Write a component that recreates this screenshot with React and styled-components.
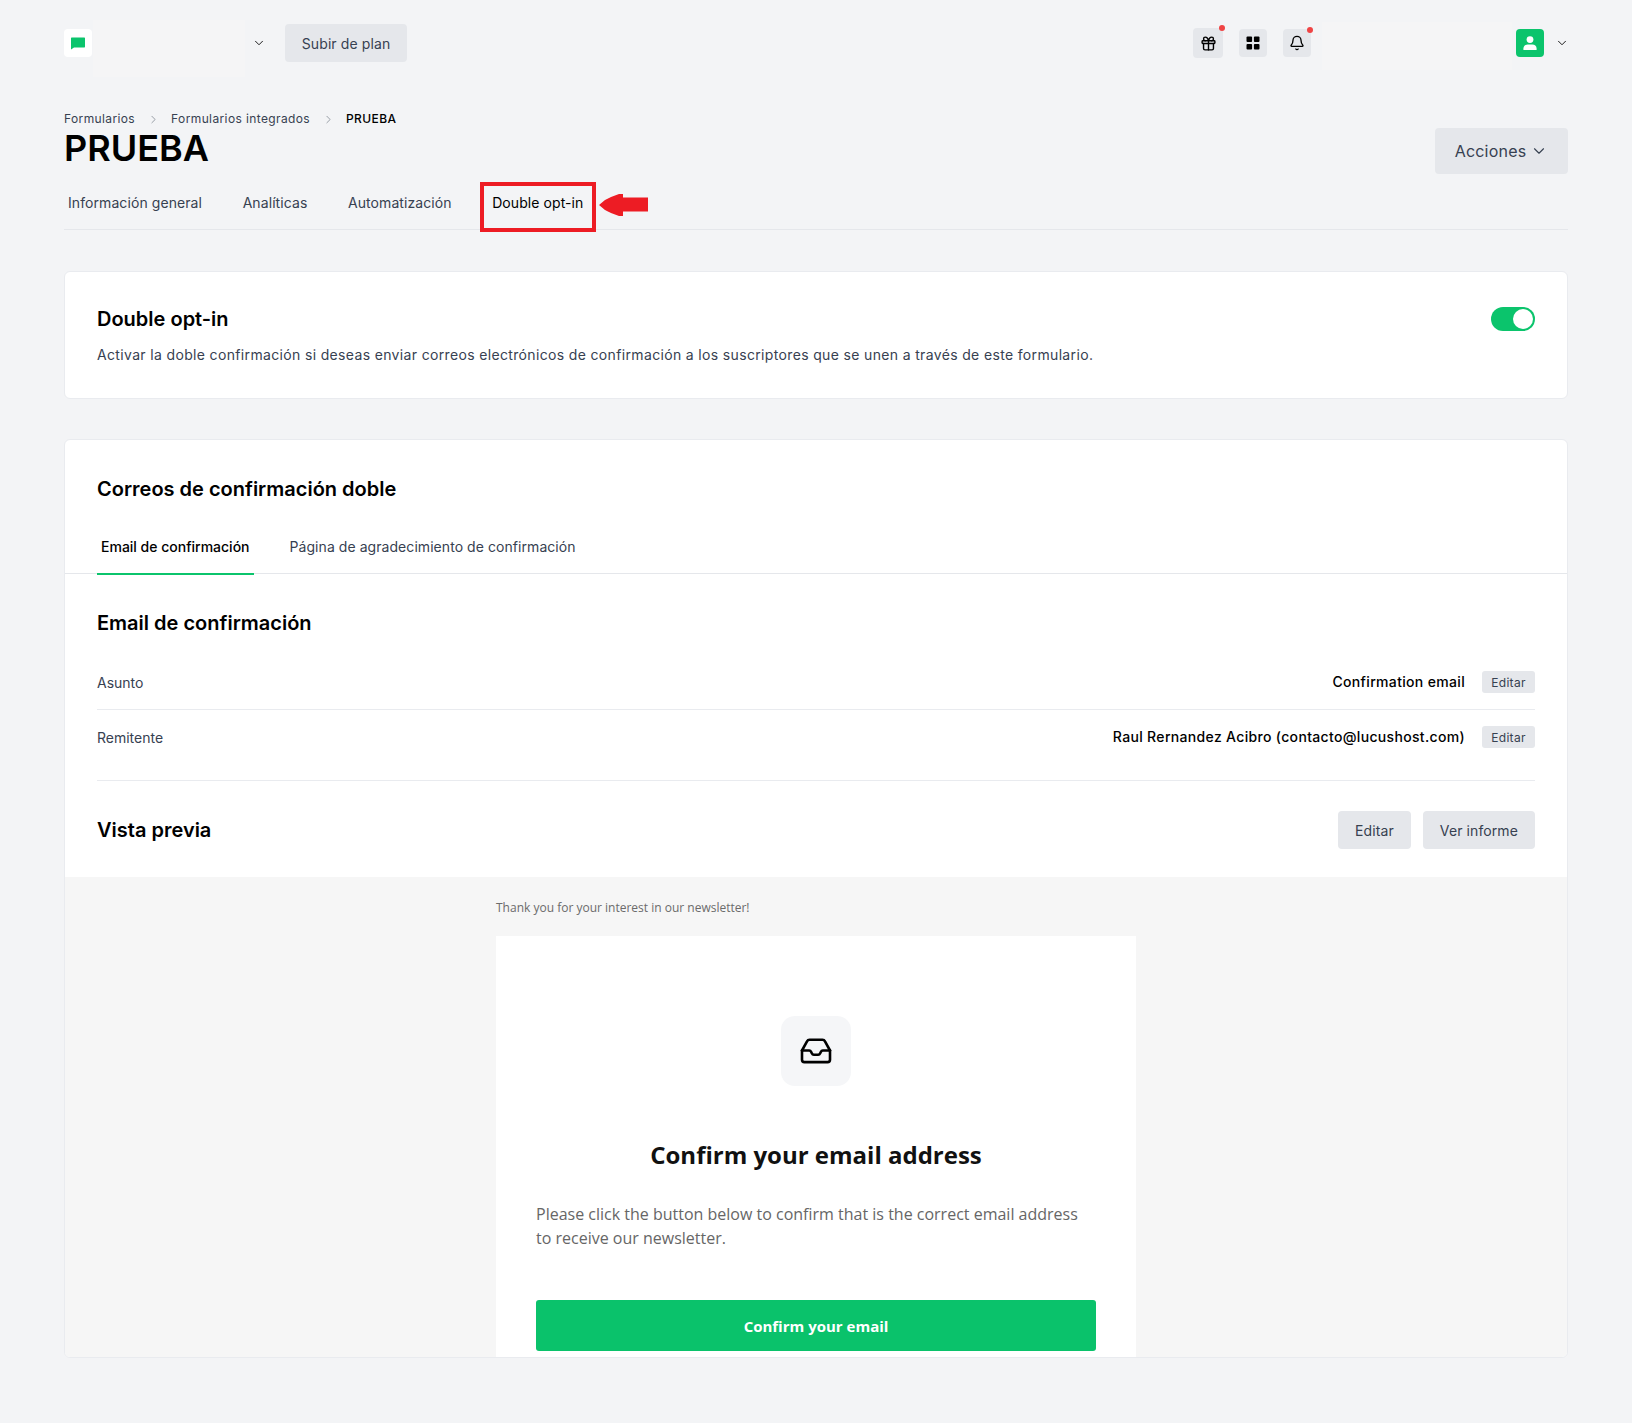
import React from 'react';
import styled, { createGlobalStyle } from 'styled-components';
import { ChevronDown, ChevronRight, Gift, Bell } from 'lucide-react';

const GlobalStyle = createGlobalStyle`
  html, body {
    margin: 0;
    padding: 0;
    background: #f3f4f6;
  }
  body {
    font-family: Inter, "Liberation Sans", sans-serif;
    color: #000;
  }
  * {
    box-sizing: border-box;
  }
`;

const Page = styled.div`
  min-height: 1423px;
  padding: 0 64px 66px;
`;

const TopBar = styled.header`
  height: 86px;
  padding-top: 20px;
  display: flex;
  justify-content: space-between;
  align-items: flex-start;
`;

const BarGroup = styled.div`
  display: flex;
  align-items: flex-start;
`;

const LogoBox = styled.div`
  width: 28px;
  height: 28px;
  margin-top: 9px;
  border-radius: 4px;
  background: #fff;
  display: flex;
  align-items: center;
  justify-content: center;
`;

const Blank = styled.div`
  width: ${(p) => p.$w}px;
  height: ${(p) => p.$h}px;
  margin: ${(p) => p.$m};
  background: #f5f5f6;
`;

const SmallChevron = styled.span`
  display: flex;
  width: 14px;
  margin: 16px ${(p) => p.$right}px 0 ${(p) => p.$left}px;
  color: #000;
`;

const PlanButton = styled.button`
  width: 122px;
  height: 38px;
  margin-top: 4px;
  padding: 0;
  border: 0;
  border-radius: 4px;
  background: #e5e7eb;
  color: #374151;
  font: 400 14px Inter, sans-serif;
  letter-spacing: 0.1px;
`;

const IconTile = styled.div`
  position: relative;
  width: ${(p) => p.$size || 28}px;
  height: ${(p) => p.$size || 28}px;
  margin: ${(p) => p.$m};
  border-radius: 4px;
  background: ${(p) => p.$bg || '#e5e7eb'};
  color: #000;
  display: flex;
  align-items: center;
  justify-content: center;
`;

const Dot = styled.span`
  position: absolute;
  top: ${(p) => p.$top}px;
  right: ${(p) => p.$right}px;
  width: 6px;
  height: 6px;
  border-radius: 50%;
  background: #ef4444;
`;

const HeadRow = styled.div`
  display: flex;
  justify-content: space-between;
  align-items: flex-end;
`;

const Breadcrumbs = styled.nav`
  display: flex;
  align-items: center;
  height: 16px;
  margin-top: 25px;
  font-size: 12px;
  line-height: 16px;
  letter-spacing: 0.38px;
  color: #374151;
`;

const Crumb = styled.span`
  color: ${(p) => (p.$current ? '#000' : '#374151')};
  font-weight: ${(p) => (p.$current ? 500 : 400)};
`;

const CrumbSep = styled.span`
  display: flex;
  width: 36px;
  justify-content: center;
  color: #4b5563;
`;

const Title = styled.h1`
  margin: 1px 0 0;
  font-size: 36px;
  line-height: 40px;
  font-weight: 600;
  color: #000;
`;

const ActionsButton = styled.button`
  width: 133px;
  height: 46px;
  border: 0;
  border-radius: 4px;
  background: #e5e7eb;
  color: #374151;
  font: 400 16px Inter, sans-serif;
  letter-spacing: 0.2px;
  display: flex;
  align-items: center;
  justify-content: center;
  gap: 4px;
  margin-bottom: -6px;
`;

const PageTabs = styled.div`
  display: flex;
  height: 61px;
  margin-top: 1px;
  margin-bottom: 41px;
  border-bottom: 1px solid #e5e7eb;
`;

const PageTab = styled.div`
  position: relative;
  padding: 0 4px;
  margin-right: 32.6px;
  height: 37px;
  margin-top: 15px;
  display: flex;
  align-items: center;
  font-size: 14px;
  letter-spacing: 0.08px;
  color: ${(p) => (p.$active ? '#000' : '#374151')};
`;

const Highlight = styled.span`
  position: absolute;
  left: -8px;
  top: -2px;
  width: 116px;
  height: 50px;
  border: 4px solid #ed1c24;
`;

const ArrowMark = styled.svg`
  position: absolute;
  left: 111px;
  top: 10px;
`;

const Card = styled.section`
  background: #fff;
  border: 1px solid #e9ebef;
  border-radius: 6px;
  margin-bottom: ${(p) => p.$mb || 0}px;
  overflow: hidden;
`;

const OptInBody = styled.div`
  height: 126px;
  padding: 33px 32px 0;
`;

const OptInTop = styled.div`
  display: flex;
  justify-content: space-between;
  align-items: center;
  height: 28px;
`;

const CardTitle = styled.h2`
  margin: 0;
  font-size: 20px;
  line-height: 28px;
  font-weight: 600;
  color: #000;
`;

const Toggle = styled.div`
  width: 44px;
  height: 24px;
  border-radius: 12px;
  background: #0bc46c;
  padding: 2px;
  display: flex;
  justify-content: flex-end;
`;

const Knob = styled.span`
  width: 20px;
  height: 20px;
  border-radius: 50%;
  background: #fff;
`;

const Description = styled.p`
  margin: 12px 0 0;
  font-size: 14px;
  line-height: 20px;
  letter-spacing: 0.345px;
  color: #374151;
`;

const SectionHead = styled.div`
  padding: 35px 32px 0;
`;

const InnerTabs = styled.div`
  display: flex;
  gap: 32px;
  height: 71px;
  padding: 0 32px;
  border-bottom: 1px solid #e5e7eb;
`;

const InnerTab = styled.div`
  margin-top: 23px;
  height: 49px;
  padding: 0 4px 6px;
  margin-bottom: -1px;
  display: flex;
  align-items: center;
  font-size: 14px;
  letter-spacing: ${(p) => (p.$active ? 0 : 0.06)}px;
  font-weight: ${(p) => (p.$active ? 500 : 400)};
  color: ${(p) => (p.$active ? '#000' : '#374151')};
  border-bottom: 2px solid ${(p) => (p.$active ? '#0bc46c' : 'transparent')};
`;

const DetailBlock = styled.div`
  padding: 35px 32px 0;
`;

const Row = styled.div`
  height: ${(p) => p.$h}px;
  padding-top: ${(p) => p.$pt}px;
  display: flex;
  justify-content: space-between;
  align-items: flex-start;
  border-bottom: 1px solid #e9ebef;
`;

const RowLabel = styled.span`
  font-size: 14px;
  line-height: 20px;
  margin-top: 2px;
  color: #374151;
`;

const RowValue = styled.div`
  display: flex;
  align-items: center;
  gap: 17px;
  font-size: 14px;
  line-height: 22px;
  letter-spacing: 0.33px;
  font-weight: 500;
  color: #000;
`;

const TinyButton = styled.button`
  width: 53px;
  height: 22px;
  padding: 0;
  border: 0;
  border-radius: 3px;
  background: #e5e7eb;
  color: #374151;
  font: 400 12px Inter, sans-serif;
  letter-spacing: 0.3px;
`;

const PreviewHead = styled.div`
  height: 96px;
  padding-top: 30px;
  display: flex;
  justify-content: space-between;
  align-items: flex-start;
`;

const PreviewTitle = styled(CardTitle)`
  padding-top: 5px;
`;

const ButtonGroup = styled.div`
  display: flex;
  gap: 12px;
`;

const GrayButton = styled.button`
  height: 38px;
  padding: 0 17px;
  border: 0;
  border-radius: 4px;
  background: #e5e7eb;
  color: #374151;
  font: 400 14px Inter, sans-serif;
  letter-spacing: 0.1px;
`;

const PreviewArea = styled.div`
  height: 480px;
  background: #f6f6f6;
  overflow: hidden;
  font-family: "Open Sans", "Noto Sans", sans-serif;
`;

const MailColumn = styled.div`
  width: 640px;
  margin: 0 auto;
`;

const Preheader = styled.div`
  height: 59px;
  padding-top: 22px;
  font-size: 12px;
  line-height: 18px;
  color: #6b6b6b;
`;

const MailCard = styled.div`
  background: #fff;
  height: 421px;
  padding: 80px 40px 0;
`;

const MailIcon = styled.div`
  width: 70px;
  height: 70px;
  margin: 0 auto;
  border-radius: 14px;
  background: #f5f6f8;
  display: flex;
  align-items: center;
  justify-content: center;
`;

const MailHeading = styled.h3`
  margin: 51px 0 0;
  text-align: center;
  font-size: 24px;
  line-height: 36px;
  font-weight: 700;
  color: #111;
`;

const MailText = styled.p`
  margin: 29px 0 0;
  font-size: 16px;
  line-height: 24px;
  color: #666;
`;

const ConfirmButton = styled.div`
  height: 51px;
  margin-top: 50px;
  border-radius: 3px;
  background: #0ac26b;
  color: #fff;
  font-size: 15px;
  font-weight: 700;
  display: flex;
  align-items: center;
  justify-content: center;
`;

const ChatLogo = () => (
  <svg width="14" height="13" viewBox="0 0 14 13">
    <path d="M.6 .6h12.8a.6.6 0 0 1 .6.6v8.6a.6.6 0 0 1-.6.6H3L0 12.4V1.2a.6.6 0 0 1 .6-.6z" fill="#0bc46c" />
  </svg>
);

const AppsIcon = () => (
  <svg width="14" height="14" viewBox="0 0 14 14" fill="#000">
    <rect x="0.5" y="0.5" width="5.6" height="5.6" rx="1" />
    <rect x="7.9" y="0.5" width="5.6" height="5.6" rx="1" />
    <rect x="0.5" y="7.9" width="5.6" height="5.6" rx="1" />
    <rect x="7.9" y="7.9" width="5.6" height="5.6" rx="1" />
  </svg>
);

const UserIcon = () => (
  <svg width="16" height="16" viewBox="0 0 16 16" fill="#fff">
    <circle cx="8" cy="4.6" r="3.4" />
    <path d="M1.4 15v-1.6c0-2.4 2-4 4.2-4h4.8c2.2 0 4.2 1.6 4.2 4V15z" />
  </svg>
);

const InboxIcon = () => (
  <svg width="32" height="26" viewBox="0 0 32 26" fill="none" stroke="#000" strokeWidth="2.6" strokeLinejoin="round" strokeLinecap="round">
    <path d="M2 12.5 7 3.4c.5-1 1.4-1.6 2.5-1.6h13c1.1 0 2 .6 2.5 1.6l5 9.1" />
    <path d="M2 12.5h7.2c1 0 1.6.6 2 1.5l.6 1.3c.4.9 1 1.5 2 1.5h4.4c1 0 1.6-.6 2-1.5l.6-1.3c.4-.9 1-1.5 2-1.5H30" />
    <path d="M2 12.5v9.2c0 1.4 1 2.4 2.4 2.4h23.2c1.4 0 2.4-1 2.4-2.4v-9.2" />
  </svg>
);

const App = () => (
  <>
    <GlobalStyle />
    <Page>
      <TopBar>
        <BarGroup>
          <LogoBox>
            <ChatLogo />
          </LogoBox>
          <Blank $w={152} $h={57} $m="0 0 0 1px" />
          <SmallChevron $left={7} $right={19}>
            <ChevronDown size={14} strokeWidth={1.5} />
          </SmallChevron>
          <PlanButton>Subir de plan</PlanButton>
        </BarGroup>
        <BarGroup>
          <IconTile $size={30} $m="8px 16px 0 0">
            <Gift size={17} strokeWidth={2} />
            <Dot $top={-3} $right={-2} />
          </IconTile>
          <IconTile $m="9px 16px 0 0">
            <AppsIcon />
          </IconTile>
          <IconTile $m="9px 0 0 0">
            <Bell size={16} strokeWidth={2} />
            <Dot $top={-2} $right={-2} />
          </IconTile>
          <Blank $w={190} $h={48} $m="2px 4px 0 11px" />
          <IconTile $bg="#0bc46c" $m="9px 0 0 0">
            <UserIcon />
          </IconTile>
          <SmallChevron $left={11} $right={-1}>
            <ChevronDown size={14} strokeWidth={1.5} />
          </SmallChevron>
        </BarGroup>
      </TopBar>

      <Breadcrumbs>
        <Crumb>Formularios</Crumb>
        <CrumbSep>
          <ChevronRight size={13} strokeWidth={1} />
        </CrumbSep>
        <Crumb>Formularios integrados</Crumb>
        <CrumbSep>
          <ChevronRight size={13} strokeWidth={1} />
        </CrumbSep>
        <Crumb $current>PRUEBA</Crumb>
      </Breadcrumbs>

      <HeadRow>
        <Title>PRUEBA</Title>
        <ActionsButton>
          Acciones
          <ChevronDown size={18} strokeWidth={1.5} />
        </ActionsButton>
      </HeadRow>

      <PageTabs>
        <PageTab>Información general</PageTab>
        <PageTab>Analíticas</PageTab>
        <PageTab>Automatización</PageTab>
        <PageTab $active>
          Double opt-in
          <Highlight />
          <ArrowMark width="49" height="22" viewBox="0 0 49 22">
            <path d="M0 11 6 6l6-3 8-3h4v3.5h25v14H24V22h-4l-8-3-6-3z" fill="#ed1c24" />
          </ArrowMark>
        </PageTab>
      </PageTabs>

      <Card $mb={40}>
        <OptInBody>
          <OptInTop>
            <CardTitle>Double opt-in</CardTitle>
            <Toggle>
              <Knob />
            </Toggle>
          </OptInTop>
          <Description>
            Activar la doble confirmación si deseas enviar correos electrónicos de confirmación a los suscriptores que se unen a través de este formulario.
          </Description>
        </OptInBody>
      </Card>

      <Card>
        <SectionHead>
          <CardTitle>Correos de confirmación doble</CardTitle>
        </SectionHead>
        <InnerTabs>
          <InnerTab $active>Email de confirmación</InnerTab>
          <InnerTab>Página de agradecimiento de confirmación</InnerTab>
        </InnerTabs>
        <DetailBlock>
          <CardTitle>Email de confirmación</CardTitle>
          <Row $h={73} $pt={34}>
            <RowLabel>Asunto</RowLabel>
            <RowValue>
              Confirmation email
              <TinyButton>Editar</TinyButton>
            </RowValue>
          </Row>
          <Row $h={71} $pt={16}>
            <RowLabel>Remitente</RowLabel>
            <RowValue>
              Raul Rernandez Acibro (contacto@lucushost.com)
              <TinyButton>Editar</TinyButton>
            </RowValue>
          </Row>
          <PreviewHead>
            <PreviewTitle>Vista previa</PreviewTitle>
            <ButtonGroup>
              <GrayButton>Editar</GrayButton>
              <GrayButton>Ver informe</GrayButton>
            </ButtonGroup>
          </PreviewHead>
        </DetailBlock>
        <PreviewArea>
          <MailColumn>
            <Preheader>Thank you for your interest in our newsletter!</Preheader>
            <MailCard>
              <MailIcon>
                <InboxIcon />
              </MailIcon>
              <MailHeading>Confirm your email address</MailHeading>
              <MailText>
                Please click the button below to confirm that is the correct email address to receive our newsletter.
              </MailText>
              <ConfirmButton>Confirm your email</ConfirmButton>
            </MailCard>
          </MailColumn>
        </PreviewArea>
      </Card>
    </Page>
  </>
);

export default App;
